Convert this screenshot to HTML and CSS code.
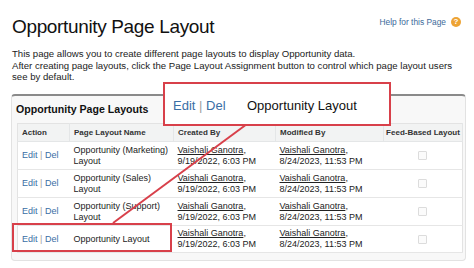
FILE: index.html
```html
<!DOCTYPE html>
<html lang="en">
<head>
    <meta charset="UTF-8">
    <meta name="viewport" content="width=device-width, initial-scale=1.0">
    <title>Opportunity Page Layout</title>
    <link rel="stylesheet" href="styles.css">
</head>
<body>
    <div class="page">

        <!-- Page header -->
        <div class="page-header">
            <h1>Opportunity Page Layout</h1>
            <a class="help-link" href="#">Help for this Page <span class="help-icon">?</span></a>
        </div>
        <p class="intro">This page allows you to create different page layouts to display Opportunity data.<br>After creating page layouts, click the Page Layout Assignment button to control which page layout users<br>see by default.</p>

        <!-- Layouts list -->
        <div class="panel">
            <div class="panel-title">Opportunity Page Layouts</div>
            <table class="layouts">
                <colgroup>
                    <col class="col-action">
                    <col class="col-name">
                    <col class="col-created">
                    <col class="col-modified">
                    <col class="col-feed">
                </colgroup>
                <thead>
                    <tr>
                        <th>Action</th>
                        <th>Page Layout Name</th>
                        <th>Created By</th>
                        <th>Modified By</th>
                        <th class="feed">Feed-Based Layout</th>
                    </tr>
                </thead>
                <tbody>
                    <tr>
                        <td><a href="#">Edit</a> <span class="sep">|</span> <a href="#">Del</a></td>
                        <td>Opportunity (Marketing)<br>Layout</td>
                        <td><a class="user" href="#">Vaishali Ganotra</a>,<br>9/19/2022, 6:03 PM</td>
                        <td><a class="user" href="#">Vaishali Ganotra</a>,<br>8/24/2023, 11:53 PM</td>
                        <td class="feed"><span class="checkbox"></span></td>
                    </tr>
                    <tr>
                        <td><a href="#">Edit</a> <span class="sep">|</span> <a href="#">Del</a></td>
                        <td>Opportunity (Sales)<br>Layout</td>
                        <td><a class="user" href="#">Vaishali Ganotra</a>,<br>9/19/2022, 6:03 PM</td>
                        <td><a class="user" href="#">Vaishali Ganotra</a>,<br>8/24/2023, 11:53 PM</td>
                        <td class="feed"><span class="checkbox"></span></td>
                    </tr>
                    <tr>
                        <td><a href="#">Edit</a> <span class="sep">|</span> <a href="#">Del</a></td>
                        <td>Opportunity (Support)<br>Layout</td>
                        <td><a class="user" href="#">Vaishali Ganotra</a>,<br>9/19/2022, 6:03 PM</td>
                        <td><a class="user" href="#">Vaishali Ganotra</a>,<br>8/24/2023, 11:53 PM</td>
                        <td class="feed"><span class="checkbox"></span></td>
                    </tr>
                    <tr>
                        <td><a href="#">Edit</a> <span class="sep">|</span> <a href="#">Del</a></td>
                        <td>Opportunity Layout</td>
                        <td><a class="user" href="#">Vaishali Ganotra</a>,<br>9/19/2022, 6:03 PM</td>
                        <td><a class="user" href="#">Vaishali Ganotra</a>,<br>8/24/2023, 11:53 PM</td>
                        <td class="feed"><span class="checkbox"></span></td>
                    </tr>
                </tbody>
            </table>
        </div>

        <!-- Annotation overlay -->
        <svg class="pointer" width="474" height="268" viewBox="0 0 474 268">
            <line x1="247" y1="124" x2="113" y2="223" stroke="#d8404a" stroke-width="2"/>
        </svg>
        <div class="highlight"></div>
        <div class="callout">
            <span class="callout-action"><a href="#">Edit</a> <span class="sep">|</span> <a href="#">Del</a></span>
            <span class="callout-name">Opportunity Layout</span>
        </div>
    </div>
</body>
</html>
```

FILE: styles.css
```css
body {
    margin: 0;
    padding: 0;
    background: #ffffff;
    font-family: 'Liberation Sans', Arial, sans-serif;
    color: #222222;
}
a {
    color: #3a6ea5;
    text-decoration: none;
}
.page {
    position: relative;
    width: 474px;
    height: 268px;
    overflow: hidden;
}
.page-header {
    display: flex;
    justify-content: space-between;
    align-items: flex-start;
    padding: 16px 13px 0 12px;
}
.page-header h1 {
    margin: 0;
    font-size: 19px;
    line-height: 22px;
    font-weight: normal;
    letter-spacing: -0.35px;
    color: #111111;
}
.help-link {
    display: flex;
    align-items: center;
    gap: 5px;
    margin-top: 1px;
    font-size: 8.4px;
    line-height: 10px;
    color: #3d6a9a;
}
.help-icon {
    display: inline-flex;
    justify-content: center;
    align-items: center;
    width: 10px;
    height: 10px;
    border-radius: 50%;
    background: #eda334;
    color: #ffffff;
    font-size: 8px;
    font-weight: bold;
}
.intro {
    margin: 10px 0 0 12px;
    font-size: 9.6px;
    line-height: 11.7px;
    color: #222222;
}
.panel {
    margin: 11px 8px 0 11px;
    padding: 0 4px 7px 4px;
    background: #f8f8f8;
    border: 1px solid #e2e2e2;
    border-top: 2px solid #8a8a8a;
    border-radius: 4px;
}
.panel-title {
    height: 27px;
    line-height: 27px;
    font-size: 10.6px;
    font-weight: bold;
    color: #111111;
}
.layouts {
    width: 445px;
    margin-left: 1px;
    table-layout: fixed;
    border-collapse: collapse;
    background: #ffffff;
    border: 1px solid #e3e3e3;
}
.col-action { width: 52px; }
.col-name { width: 104px; }
.col-created { width: 102px; }
.col-modified { width: 108px; }
.col-feed { width: 79px; }
.layouts th {
    height: 17px;
    padding: 0 4px;
    text-align: left;
    font-size: 8px;
    font-weight: bold;
    color: #333333;
    background: #f2f3f3;
    border-right: 1px solid #e4e6e7;
    border-bottom: 1px solid #e4e6e7;
}
.layouts td {
    height: 27px;
    padding: 0 4px;
    font-size: 9px;
    line-height: 10.8px;
    color: #222222;
    border-bottom: 1px solid #e6e6e6;
    vertical-align: middle;
}
.layouts .feed {
    padding: 0;
    text-align: center;
}
.layouts tbody tr:last-child td {
    height: 26px;
}
.sep {
    color: #a0a0a0;
}
.user {
    color: #222222;
    text-decoration: underline;
}
.checkbox {
    display: inline-block;
    width: 7px;
    height: 7px;
    border: 1px solid #dcdcdc;
    border-radius: 1px;
    background: #fbfbfb;
    vertical-align: middle;
}
.pointer {
    position: absolute;
    left: 0;
    top: 0;
    pointer-events: none;
}
.highlight {
    position: absolute;
    left: 12px;
    top: 223px;
    width: 156px;
    height: 25px;
    border: 2px solid #d8404a;
}
.callout {
    position: absolute;
    left: 163px;
    top: 82px;
    width: 224px;
    height: 38px;
    display: flex;
    align-items: center;
    padding-top: 2px;
    background: #ffffff;
    border: 2px solid #d8404a;
    box-sizing: content-box;
}
.callout-action {
    width: 74px;
    padding-left: 8px;
    font-size: 13px;
}
.callout-name {
    font-size: 13px;
    color: #111111;
}
```
